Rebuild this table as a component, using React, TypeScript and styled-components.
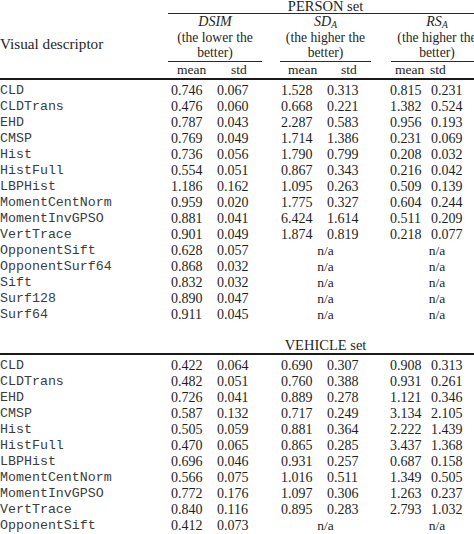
import React from "react";
import styled, { createGlobalStyle } from "styled-components";

const GlobalStyle = createGlobalStyle`
  html, body {
    margin: 0;
    padding: 0;
    background: #ffffff;
    overflow: hidden;
  }
  body {
    width: 474px;
    height: 534px;
  }
`;

// name | DSIM mean std | gap | SD mean std | gap | RS mean std
const COLS = "168px 46px 48px 18px 44px 47px 20px 37px 55px";
const VALUE_COLS = [2, 3, 5, 6, 8, 9];
const VALUE_PADS = [3, 3, 1, 3, -1, 3];
const HEAD_PADS = [9, 17, 8, 17, 4, 2];
const GROUP_COLS = ["2 / 4", "5 / 7", "8 / 10"];

type Row = [string, ...(number | null)[]];

const PERSON: Row[] = [
  ["CLD", 0.746, 0.067, 1.528, 0.313, 0.815, 0.231],
  ["CLDTrans", 0.476, 0.06, 0.668, 0.221, 1.382, 0.524],
  ["EHD", 0.787, 0.043, 2.287, 0.583, 0.956, 0.193],
  ["CMSP", 0.769, 0.049, 1.714, 1.386, 0.231, 0.069],
  ["Hist", 0.736, 0.056, 1.79, 0.799, 0.208, 0.032],
  ["HistFull", 0.554, 0.051, 0.867, 0.343, 0.216, 0.042],
  ["LBPHist", 1.186, 0.162, 1.095, 0.263, 0.509, 0.139],
  ["MomentCentNorm", 0.959, 0.02, 1.775, 0.327, 0.604, 0.244],
  ["MomentInvGPSO", 0.881, 0.041, 6.424, 1.614, 0.511, 0.209],
  ["VertTrace", 0.901, 0.049, 1.874, 0.819, 0.218, 0.077],
  ["OpponentSift", 0.628, 0.057, null, null, null, null],
  ["OpponentSurf64", 0.868, 0.032, null, null, null, null],
  ["Sift", 0.832, 0.032, null, null, null, null],
  ["Surf128", 0.89, 0.047, null, null, null, null],
  ["Surf64", 0.911, 0.045, null, null, null, null],
];

const VEHICLE: Row[] = [
  ["CLD", 0.422, 0.064, 0.69, 0.307, 0.908, 0.313],
  ["CLDTrans", 0.482, 0.051, 0.76, 0.388, 0.931, 0.261],
  ["EHD", 0.726, 0.041, 0.889, 0.278, 1.121, 0.346],
  ["CMSP", 0.587, 0.132, 0.717, 0.249, 3.134, 2.105],
  ["Hist", 0.505, 0.059, 0.881, 0.364, 2.222, 1.439],
  ["HistFull", 0.47, 0.065, 0.865, 0.285, 3.437, 1.368],
  ["LBPHist", 0.696, 0.046, 0.931, 0.257, 0.687, 0.158],
  ["MomentCentNorm", 0.566, 0.075, 1.016, 0.511, 1.349, 0.505],
  ["MomentInvGPSO", 0.772, 0.176, 1.097, 0.306, 1.263, 0.237],
  ["VertTrace", 0.84, 0.116, 0.895, 0.283, 2.793, 1.032],
  ["OpponentSift", 0.412, 0.073, null, null, null, null],
];

const Page = styled.div`
  width: 483px;
  font-family: "Liberation Serif", "Times New Roman", serif;
  font-size: 14px;
  color: #1e1e1e;
`;

const Header = styled.div`
  display: grid;
  grid-template-columns: ${COLS};
  grid-template-rows: 14px auto auto;
  border-bottom: 2px solid #1a1a1a;
`;

const SetTitle = styled.div`
  grid-column: 2 / -1;
  grid-row: 1;
  height: 13px;
  line-height: 13px;
  font-size: 14.5px;
  text-align: center;
  border-bottom: 1px solid #2a2a2a;
`;

const DescriptorLabel = styled.div`
  grid-column: 1;
  grid-row: 2 / 4;
  align-self: center;
  padding-bottom: 4px;
  font-size: 15.2px;
  white-space: nowrap;
`;

const GroupLabel = styled.div<{ $cols: string }>`
  grid-column: ${(p) => p.$cols};
  grid-row: 2;
  font-size: 13.6px;
  line-height: 15.5px;
  text-align: center;
  white-space: nowrap;
  border-bottom: 1px solid #2a2a2a;
`;

const Metric = styled.div`
  font-style: italic;
  font-size: 14px;
  sub {
    font-size: 9.5px;
    line-height: 0;
    vertical-align: -2px;
  }
`;

const StatLabel = styled.div<{ $col: number; $pad: number }>`
  grid-column: ${(p) => p.$col};
  grid-row: 3;
  padding-left: ${(p) => p.$pad}px;
  font-size: 13.5px;
  line-height: 16px;
  height: 16px;
  white-space: nowrap;
`;

const Body = styled.div`
  padding-top: 3.5px;
`;

const DataRow = styled.div`
  display: grid;
  grid-template-columns: ${COLS};
  height: 16px;
  line-height: 16px;
`;

const NameCell = styled.div`
  grid-column: 1;
  font-family: "Liberation Mono", "Courier New", monospace;
  font-size: 13.3px;
  color: #3c3c3c;
  white-space: nowrap;
`;

const NumCell = styled.div<{ $col: number; $pad: number }>`
  grid-column: ${(p) => p.$col};
  margin-left: ${(p) => p.$pad}px;
  white-space: nowrap;
`;

const NaCell = styled.div<{ $cols: string }>`
  grid-column: ${(p) => p.$cols};
  font-size: 13.5px;
  text-align: center;
`;

const VehicleTitle = styled.div`
  display: grid;
  grid-template-columns: ${COLS};
  margin-top: 14px;
  height: 16px;
  line-height: 16px;
  border-bottom: 2px solid #1a1a1a;
  margin-bottom: 3px;
`;

const VehicleText = styled.div`
  grid-column: 2 / -1;
  font-size: 14.5px;
  text-align: center;
`;

const GROUPS: { name: string; sub?: string; note: string[] }[] = [
  { name: "DSIM", note: ["(the lower the", "better)"] },
  { name: "SD", sub: "A", note: ["(the higher the", "better)"] },
  { name: "RS", sub: "A", note: ["(the higher the", "better)"] },
];

const TableRows = ({ rows }: { rows: Row[] }) => (
  <>
    {rows.map(([name, ...vals]) => (
      <DataRow key={name}>
        <NameCell>{name}</NameCell>
        {vals.map((v, i) => {
          if (v === null) {
            return i % 2 === 0 ? (
              <NaCell key={i} $cols={GROUP_COLS[i / 2]}>
                n/a
              </NaCell>
            ) : null;
          }
          return (
            <NumCell key={i} $col={VALUE_COLS[i]} $pad={VALUE_PADS[i]}>
              {v.toFixed(3)}
            </NumCell>
          );
        })}
      </DataRow>
    ))}
  </>
);

export default function App() {
  return (
    <>
      <GlobalStyle />
      <Page>
        <Header>
          <SetTitle>PERSON set</SetTitle>
          <DescriptorLabel>Visual descriptor</DescriptorLabel>
          {GROUPS.map((g, i) => (
            <GroupLabel key={g.name} $cols={GROUP_COLS[i]}>
              <Metric>
                {g.name}
                {g.sub && <sub>{g.sub}</sub>}
              </Metric>
              {g.note.map((line) => (
                <div key={line}>{line}</div>
              ))}
            </GroupLabel>
          ))}
          {VALUE_COLS.map((col, i) => (
            <StatLabel key={col} $col={col} $pad={HEAD_PADS[i]}>
              {i % 2 === 0 ? "mean" : "std"}
            </StatLabel>
          ))}
        </Header>
        <Body>
          <TableRows rows={PERSON} />
        </Body>
        <VehicleTitle>
          <VehicleText>VEHICLE set</VehicleText>
        </VehicleTitle>
        <TableRows rows={VEHICLE} />
      </Page>
    </>
  );
}
